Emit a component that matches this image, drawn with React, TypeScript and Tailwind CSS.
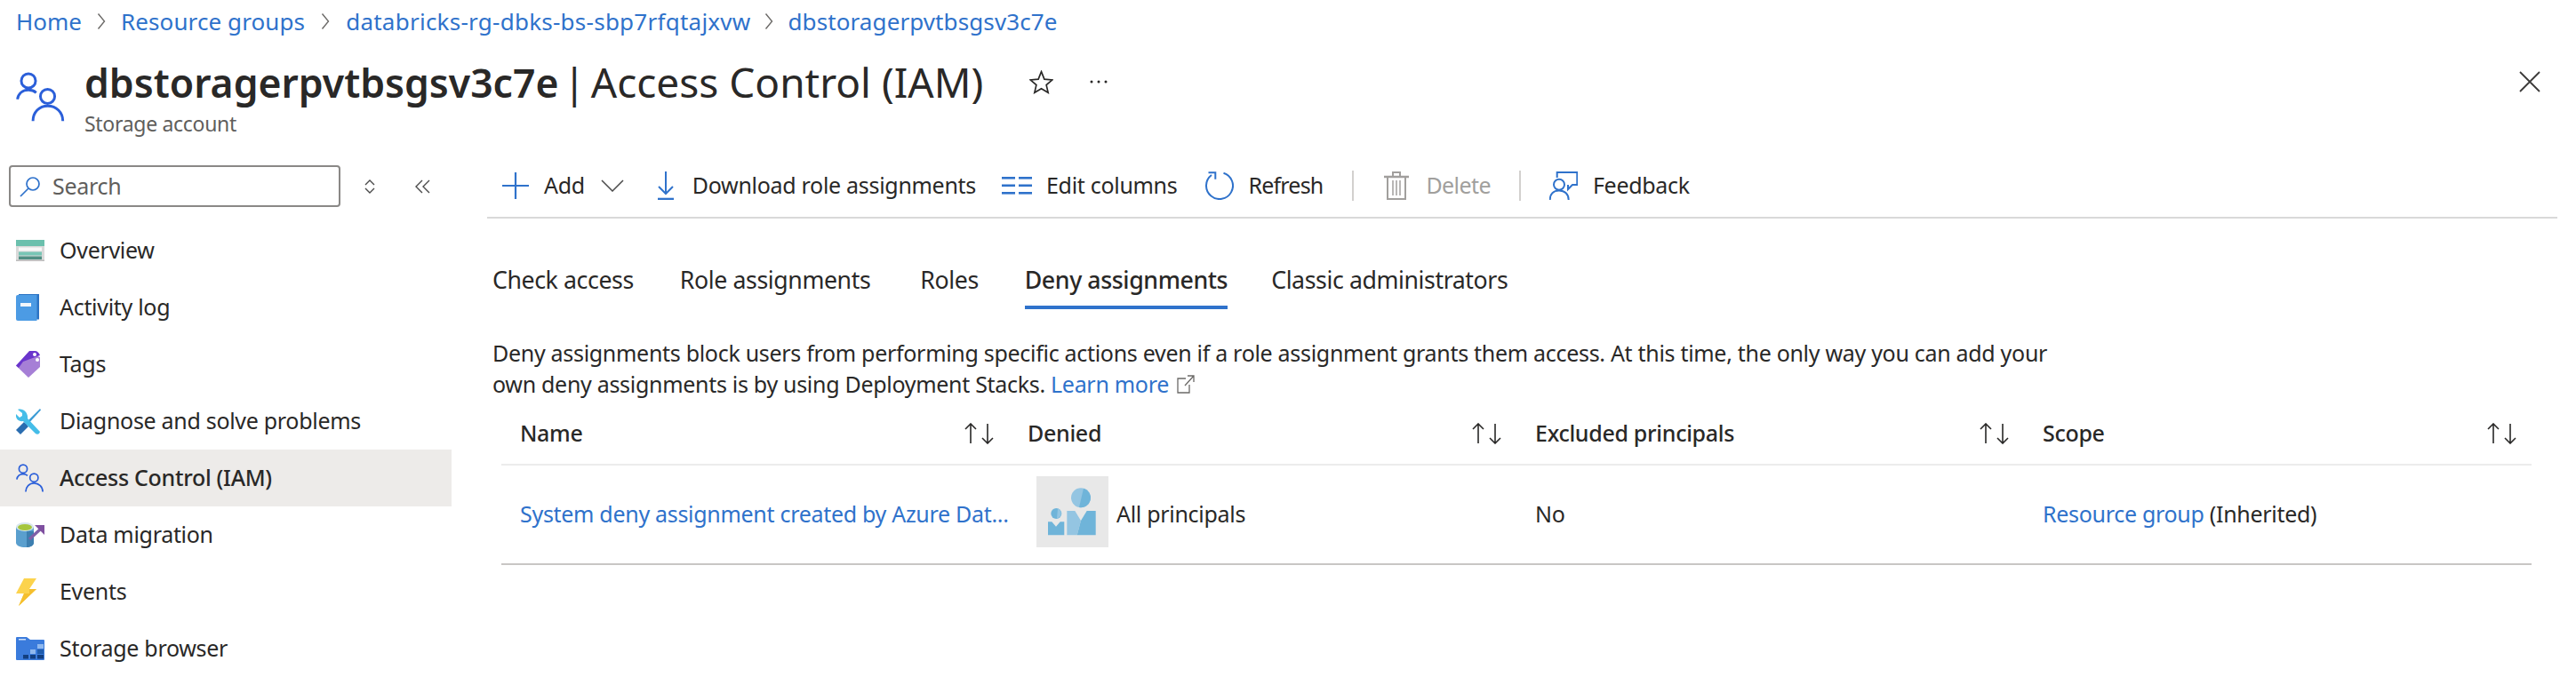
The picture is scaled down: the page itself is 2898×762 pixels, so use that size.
import React from 'react';

const FONT = "[font-family:'Noto_Sans',sans-serif]";

function PeopleIcon({ className }: { className: string }) {
  return (
    <svg viewBox="0 0 32 32" fill="none" stroke="#2b5fd9" strokeWidth="1.7" className={className}>
      <circle cx="8" cy="5.7" r="4.6" />
      <circle cx="20.3" cy="15.7" r="4.6" />
      <path d="M0.9 17.6C1.6 13.6 4.5 11.6 8 11.6c2 0 3.6.5 5 1.7" />
      <path d="M10.9 31.5c0-5.6 4-9.7 9.5-9.7s9.7 4.1 9.7 9.7" />
    </svg>
  );
}

function OverviewIcon() {
  return (
    <svg viewBox="0 0 32 24" className="w-[32px] h-[24px]">
      <rect width="32" height="24" fill="#d9d9d9" />
      <rect width="32" height="7" fill="#6bc0ad" />
      <rect x="3" y="8.5" width="26" height="4" fill="#f7f7f7" />
      <rect x="3" y="13.5" width="26" height="4" fill="#77c5b5" />
      <rect x="3" y="18.5" width="26" height="3.5" fill="#4f8f83" />
      <rect y="22.5" width="32" height="1.5" fill="#bdbdbd" />
    </svg>
  );
}

function ActivityIcon() {
  return (
    <svg viewBox="0 0 26 30" className="w-[26px] h-[30px]">
      <path d="M3 0h23v28.500h-3V2H3z" fill="#2d74c4" />
      <path d="M0 3a2 2 0 0 1 2-2h21.500v29H2a2 2 0 0 1-2-2z" fill="#4c9be4" />
      <rect x="5" y="10" width="12" height="4" fill="#f2f6fb" />
    </svg>
  );
}

function TagsIcon() {
  return (
    <svg viewBox="0 0 28 30" className="w-[28px] h-[30px]">
      <path d="M0 16.500L15 2l12 5v11L14 30z" fill="#a67fd6" />
      <path d="M0 16.500L15 0h6c3 0 5 2 6 5L8 12 3 19z" fill="#6a35cc" />
      <circle cx="21" cy="4" r="2" fill="#fff" />
      <circle cx="24" cy="10" r="2" fill="#fff" />
    </svg>
  );
}

function ToolsIcon() {
  return (
    <svg viewBox="0 0 28 29" className="w-[28px] h-[29px]">
      <path d="M10 17L27 0l1 1.500L12 19z" fill="#3a9bd5" />
      <path d="M9 15l5 5-9 9-5-5z" fill="#2a6db0" />
      <path d="M2 1l5 4v3L4 10 0 6c-1 5 3 9 8 8l14 14c1 1 3 1 4 0l1-2L13 11C14 5 8-1 2 1z" fill="#45bde8" />
    </svg>
  );
}

function MigrationIcon() {
  return (
    <svg viewBox="0 0 32 28" className="w-[32px] h-[28px]">
      <path d="M0 5v18c0 3 5 5 10 5s10-2 10-5V5z" fill="#5a9fce" />
      <path d="M12 10h8v13c0 3-4 5-8 5z" fill="#3d7fb0" />
      <ellipse cx="10" cy="5" rx="10" ry="5" fill="#d8e6ee" />
      <ellipse cx="10" cy="5.500" rx="8" ry="3.500" fill="#a5c63c" />
      <path d="M15 19L27 8" stroke="#7f5fa8" strokeWidth="3.500" />
      <path d="M21 3h11v11z" fill="#7f4fa0" />
    </svg>
  );
}

function BoltIcon() {
  return (
    <svg viewBox="0 0 23 31" className="w-[23px] h-[31px]">
      <path d="M9 0h14l-8 12h8L3 31l6-14H0z" fill="#fcd34d" />
      <path d="M15 12h8L3 31l6-14h6z" fill="#f5bf2e" />
    </svg>
  );
}

function FolderIcon() {
  return (
    <svg viewBox="0 0 32 26" className="w-[32px] h-[26px]">
      <path d="M0 1a1 1 0 0 1 1-1h11l4 3h15a1 1 0 0 1 1 1v21a1 1 0 0 1-1 1H1a1 1 0 0 1-1-1z" fill="#3a7bdc" />
      <rect x="3" y="2" width="8" height="1.500" fill="#cfe0f7" />
      <rect x="16" y="14" width="6" height="5" fill="#8fb8ee" />
      <rect x="24" y="8" width="7" height="5" fill="#8fb8ee" />
      <rect x="24" y="14" width="7" height="5" fill="#1f5cad" />
      <rect x="8" y="20" width="6" height="4.500" fill="#123f80" />
      <rect x="16" y="20" width="6" height="4.500" fill="#123f80" />
      <rect x="24" y="20" width="7" height="4.500" fill="#123f80" />
    </svg>
  );
}

function SortIcon() {
  return (
    <svg viewBox="0 0 33 24" fill="none" stroke="#292827" strokeWidth="1.600" className="w-[33px] h-[24px]">
      <path d="M7 23V1M1 7l6-6 6 6" />
      <path d="M26 1v22M20 17l6 6 6-6" />
    </svg>
  );
}

function Chevron() {
  return (
    <svg viewBox="0 0 10 20" fill="none" stroke="#6b6967" strokeWidth="1.400" className="w-[10px] h-[20px]">
      <path d="M1.500 1.500l7 8.500-7 8.500" />
    </svg>
  );
}

const navItems = [
  { label: 'Overview', icon: <OverviewIcon /> },
  { label: 'Activity log', icon: <ActivityIcon /> },
  { label: 'Tags', icon: <TagsIcon /> },
  { label: 'Diagnose and solve problems', icon: <ToolsIcon /> },
  { label: 'Access Control (IAM)', icon: <PeopleIcon className="w-[32px] h-[32px]" />, active: true },
  { label: 'Data migration', icon: <MigrationIcon /> },
  { label: 'Events', icon: <BoltIcon /> },
  { label: 'Storage browser', icon: <FolderIcon /> },
];

const tabs = [
  { label: 'Check access', cls: '' },
  { label: 'Role assignments', cls: '' },
  { label: 'Roles', cls: 'ml-[4px]' },
  { label: 'Deny assignments', cls: 'font-medium border-b-[4px] border-[#2f72cb]' },
  { label: 'Classic administrators', cls: '-ml-[3px]' },
];

export default function App() {
  return (
    <div className={`w-[2898px] h-[762px] overflow-hidden bg-white text-[#292827] text-[25px] tracking-[-0.3px] ${FONT}`}>
      <div className="h-[48px] pl-[18px] flex items-center text-[#2f72cb] text-[26px] tracking-normal">
        <span>Home</span>
        <span className="mx-[17px] flex"><Chevron /></span>
        <span className="tracking-[0.1px]">Resource groups</span>
        <span className="mx-[18px] flex"><Chevron /></span>
        <span className="tracking-[0.25px]">databricks-rg-dbks-bs-sbp7rfqtajxvw</span>
        <span className="mx-[16px] flex"><Chevron /></span>
        <span className="tracking-[0.1px]">dbstoragerpvtbsgsv3c7e</span>
      </div>

      <div className="h-[130px] flex relative">
        <PeopleIcon className="w-[56px] h-[58px] ml-[18px] mt-[32px]" />
        <div className="ml-[21px] mt-[14px]">
          <div className="flex items-center h-[60px]">
            <h1 className="text-[46px] leading-[60px] tracking-normal whitespace-nowrap">
              <span className="font-semibold text-[44.5px]">dbstoragerpvtbsgsv3c7e</span> <span className="-ml-[7px]">|</span> <span className="-ml-[6px]">Access Control (IAM)</span>
            </h1>
            <svg viewBox="0 0 24 24" fill="none" stroke="#292827" strokeWidth="1.500" className="w-[27px] h-[27px] ml-[52px]">
              <path d="M12 1.500l3 7.500 8 .7-6 5.100 1.800 7.700-6.800-4-6.800 4 1.800-7.700-6-5.100 8-.7z" />
            </svg>
            <svg viewBox="0 0 20 4" fill="#292827" className="w-[20px] h-[4px] ml-[41px]">
              <circle cx="2" cy="2" r="1.500" />
              <circle cx="10" cy="2" r="1.500" />
              <circle cx="18" cy="2" r="1.500" />
            </svg>
          </div>
          <div className="text-[#605e5c] text-[23px] leading-[36px] -mt-[1px]">Storage account</div>
        </div>
        <svg viewBox="0 0 24 24" fill="none" stroke="#3b3a39" strokeWidth="1.800" className="w-[24px] h-[24px] absolute left-[2834px] top-[32px]">
          <path d="M1 1l22 22M23 1L1 23" />
        </svg>
      </div>

      <div className="flex">
        <aside className="w-[508px] shrink-0 pt-[8px]">
          <div className="flex items-center h-[47px] mb-[17px]">
            <div className="ml-[10px] w-[373px] h-[47px] border-2 border-[#8a8886] rounded-[4px] flex items-center pl-[10px] text-[#605e5c]">
              <svg viewBox="0 0 24 24" fill="none" stroke="#2f72cb" strokeWidth="1.700" className="w-[24px] h-[24px]">
                <circle cx="15" cy="9" r="7" />
                <path d="M10 14L1 23" />
              </svg>
              <span className="ml-[13px]">Search</span>
            </div>
            <svg viewBox="0 0 14 18" fill="none" stroke="#4a4a4a" strokeWidth="1.400" className="w-[14px] h-[18px] ml-[26px]">
              <path d="M2 7l5-5 5 5M2 11l5 5 5-5" />
            </svg>
            <svg viewBox="0 0 18 16" fill="none" stroke="#4a4a4a" strokeWidth="1.400" className="w-[18px] h-[16px] ml-[44px]">
              <path d="M8 1L1 8l7 7M16 1L9 8l7 7" />
            </svg>
          </div>
          {navItems.map(item => (
            <div key={item.label} className={`h-[64px] flex items-center ${item.active ? 'bg-[#edebe9] font-medium' : ''}`}>
              <span className="w-[67px] pl-[18px] flex">{item.icon}</span>
              <span>{item.label}</span>
            </div>
          ))}
        </aside>

        <main className="flex-1 pl-[40px] pr-[21px]">
          <div className="h-[68px] border-b-2 border-[#d9d9d9] flex items-center pl-[17px] pb-[4px]">
            <svg viewBox="0 0 30 30" fill="none" stroke="#2f72cb" strokeWidth="2.200" className="w-[30px] h-[30px]">
              <path d="M15 0v30M0 15h30" />
            </svg>
            <span className="ml-[17px]">Add</span>
            <svg viewBox="0 0 26 14" fill="none" stroke="#4a4a4a" strokeWidth="1.500" className="w-[26px] h-[14px] ml-[18px]">
              <path d="M1 1l12 12L25 1" />
            </svg>
            <svg viewBox="0 0 20 32" fill="none" stroke="#2f72cb" strokeWidth="2" className="w-[20px] h-[32px] ml-[37px]">
              <path d="M10 0v25M2 17l8 8 8-8" />
              <path d="M1 31h18" strokeWidth="2.600" />
            </svg>
            <span className="ml-[20px]">Download role assignments</span>
            <svg viewBox="0 0 34 20" fill="#2f72cb" className="w-[34px] h-[20px] ml-[29px]">
              <rect width="15" height="2.600" />
              <rect x="19" width="15" height="2.600" />
              <rect y="8.500" width="15" height="2.600" />
              <rect x="19" y="8.500" width="15" height="2.600" />
              <rect y="17" width="15" height="2.600" />
              <rect x="19" y="17" width="15" height="2.600" />
            </svg>
            <span className="ml-[16px]">Edit columns</span>
            <svg viewBox="0 0 32 32" fill="none" stroke="#2f72cb" strokeWidth="2" className="w-[32px] h-[32px] ml-[32px]">
              <path d="M20.500 1.700A15 15 0 1 1 7 4" />
              <path d="M3.500 1.300h7.800v7.500" />
            </svg>
            <span className="ml-[16px] tracking-[-0.8px]">Refresh</span>
            <span className="ml-[33px] w-[2px] h-[34px] bg-[#d2d0ce]" />
            <svg viewBox="0 0 28 32" fill="none" stroke="#a19f9d" strokeWidth="2" className="w-[28px] h-[32px] ml-[34px]">
              <path d="M0 6h28" strokeWidth="2.500" />
              <path d="M10 5V1h8v4" />
              <path d="M4 6v25h20V6" />
              <path d="M10 10v17M14 10v17M18 10v17" strokeWidth="1.500" />
            </svg>
            <span className="ml-[19px] text-[#a19f9d] tracking-[-0.6px]">Delete</span>
            <span className="ml-[32px] w-[2px] h-[34px] bg-[#d2d0ce]" />
            <svg viewBox="0 0 32 32" fill="none" stroke="#2f72cb" strokeWidth="2" className="w-[32px] h-[32px] ml-[32px]">
              <path d="M8.700 7V1h22.600v14H26l-5 5v-5" />
              <circle cx="11" cy="14.700" r="6" />
              <path d="M.7 32c0-6.500 4-10.500 10.300-10.500S21.700 25.500 21.700 32" />
            </svg>
            <span className="ml-[17px]">Feedback</span>
          </div>

          <div className="flex h-[55px] pl-[6px] mt-[49px] text-[26.7px] tracking-[-0.4px] gap-[52px]">
            {tabs.map(tab => (
              <div key={tab.label} className={`h-[53px] ${tab.cls}`}>{tab.label}</div>
            ))}
          </div>

          <p className="ml-[6px] mt-[30px] w-[1800px] leading-[35px] text-[25px]">
            Deny assignments block users from performing specific actions even if a role assignment grants them access. At this time, the only way you can add your own deny assignments is by using Deployment Stacks.{' '}
            <span className="text-[#2f72cb]">Learn more</span>
            <svg viewBox="0 0 20 21" fill="none" stroke="#6b6967" strokeWidth="1.300" className="inline-block w-[20px] h-[21px] ml-[9px] align-[-1px]">
              <path d="M10 4H1v16h13v-9M9 12L19 1M12 1h7v7" />
            </svg>
          </p>

          <div className="ml-[16px] mt-[4px] w-[2284px] grid grid-cols-4 h-[70px] border-b-2 border-[#ececec] items-center font-medium">
            {['Name', 'Denied', 'Excluded principals', 'Scope'].map(h => (
              <div key={h} className="flex items-center justify-between pl-[21px] pr-[17px]">
                <span>{h}</span>
                <SortIcon />
              </div>
            ))}
          </div>
          <div className="ml-[16px] w-[2284px] grid grid-cols-4 h-[112px] border-b-2 border-[#c8c6c4] items-center">
            <div className="pl-[21px] whitespace-nowrap text-[#2f72cb]">System deny assignment created by Azure Dat...</div>
            <div className="pl-[31px] flex items-center">
              <svg viewBox="0 0 81 80" className="w-[81px] h-[80px] shrink-0 mb-[6px]">
                <rect width="81" height="80" fill="#e8e8e8" />
                <circle cx="50" cy="24.300" r="11" fill="#94c5e2" />
                <path d="M53 13.700a11 11 0 0 1-5 21.400z" fill="#6fb4d9" />
                <path d="M34.300 39h9L50 50l-4.300 16.300H34.300z" fill="#94c5e2" />
                <path d="M50 50l6.700-11h10v27.300H45.700z" fill="#6fb4d9" />
                <circle cx="22.300" cy="42" r="6" fill="#6fb4d9" />
                <path d="M24 36.300a6 6 0 0 1-1 11.400z" fill="#94c5e2" />
                <path d="M13 51.300h4.300l4.700 5.400 4.700-5.400h4.600v15H13z" fill="#6fb4d9" />
              </svg>
              <span className="ml-[9px]">All principals</span>
            </div>
            <div className="pl-[21px]">No</div>
            <div className="pl-[21px]">
              <span className="text-[#2f72cb]">Resource group</span> (Inherited)
            </div>
          </div>
        </main>
      </div>
    </div>
  );
}
